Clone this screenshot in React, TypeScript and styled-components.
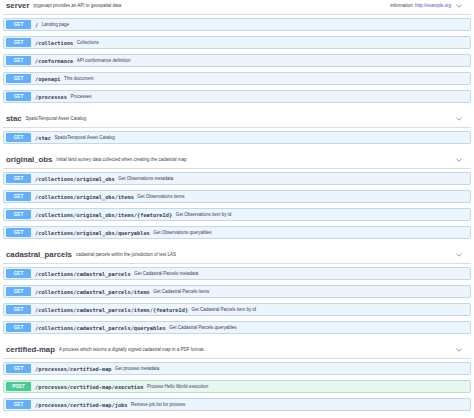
import styled, { createGlobalStyle } from 'styled-components';

type Method = 'GET' | 'POST';

interface Operation {
  method: Method;
  path: string;
  summary: string;
}

interface Tag {
  name: string;
  description: string;
  info?: boolean;
  operations: Operation[];
}

const tags: Tag[] = [
  {
    name: 'server',
    description: 'pygeoapi provides an API to geospatial data',
    info: true,
    operations: [
      { method: 'GET', path: '/', summary: 'Landing page' },
      { method: 'GET', path: '/collections', summary: 'Collections' },
      { method: 'GET', path: '/conformance', summary: 'API conformance definition' },
      { method: 'GET', path: '/openapi', summary: 'This document' },
      { method: 'GET', path: '/processes', summary: 'Processes' },
    ],
  },
  {
    name: 'stac',
    description: 'SpatioTemporal Asset Catalog',
    operations: [{ method: 'GET', path: '/stac', summary: 'SpatioTemporal Asset Catalog' }],
  },
  {
    name: 'original_obs',
    description: 'Initial land survey data collected when creating the cadastral map',
    operations: [
      { method: 'GET', path: '/collections/original_obs', summary: 'Get Observations metadata' },
      { method: 'GET', path: '/collections/original_obs/items', summary: 'Get Observations items' },
      {
        method: 'GET',
        path: '/collections/original_obs/items/{featureId}',
        summary: 'Get Observations item by id',
      },
      {
        method: 'GET',
        path: '/collections/original_obs/queryables',
        summary: 'Get Observations queryables',
      },
    ],
  },
  {
    name: 'cadastral_parcels',
    description: 'cadastral parcels within the jurisdiction of test LAS',
    operations: [
      {
        method: 'GET',
        path: '/collections/cadastral_parcels',
        summary: 'Get Cadastral Parcels metadata',
      },
      {
        method: 'GET',
        path: '/collections/cadastral_parcels/items',
        summary: 'Get Cadastral Parcels items',
      },
      {
        method: 'GET',
        path: '/collections/cadastral_parcels/items/{featureId}',
        summary: 'Get Cadastral Parcels item by id',
      },
      {
        method: 'GET',
        path: '/collections/cadastral_parcels/queryables',
        summary: 'Get Cadastral Parcels queryables',
      },
    ],
  },
  {
    name: 'certified-map',
    description: 'A process which returns a digitally signed cadastral map in a PDF format.',
    operations: [
      { method: 'GET', path: '/processes/certified-map', summary: 'Get process metadata' },
      {
        method: 'POST',
        path: '/processes/certified-map/execution',
        summary: 'Process Hello World execution',
      },
      {
        method: 'GET',
        path: '/processes/certified-map/jobs',
        summary: 'Retrieve job list for process',
      },
    ],
  },
];

const palette = {
  GET: { badge: '#61affe', bg: '#ecf4fc', border: '#bfd7f1' },
  POST: { badge: '#49cc90', bg: '#e8f6f0', border: '#b6e2cd' },
};

const GlobalStyle = createGlobalStyle`
  body {
    margin: 0;
    background: #fff;
    font-family: "Liberation Sans", Arial, sans-serif;
    color: #3b4151;
  }
`;

const Page = styled.div`
  display: flex;
  flex-direction: column;
  gap: 2px;
  margin-top: -3px;
  padding: 0 3px;
`;

const Section = styled.section`
  display: flex;
  flex-direction: column;
  gap: 5px;
  padding-bottom: 5px;
`;

const TagHeader = styled.div`
  display: flex;
  align-items: center;
  box-sizing: border-box;
  height: 18px;
  padding: 0 9px 0 3px;
  margin-bottom: -2px;
  border-bottom: 1px solid #dcdde1;
`;

const TagName = styled.span`
  font-size: 7.8px;
  font-weight: 700;
  color: #3b4151;
`;

const TagDescription = styled.span`
  flex: 1;
  margin-left: 4px;
  font-size: 4.5px;
  color: #3b4151;
`;

const Info = styled.span`
  margin-right: 5px;
  font-size: 4.5px;
  color: #3b4151;

  a {
    color: #4a4fc4;
    text-decoration: none;
  }
`;

const Chevron = styled.svg`
  width: 6px;
  height: 4px;
  flex-shrink: 0;
`;

const OpBlock = styled.div<{ $method: Method }>`
  display: flex;
  align-items: center;
  box-sizing: border-box;
  height: 13px;
  padding: 0 2px;
  background: ${(p) => palette[p.$method].bg};
  border: 1px solid ${(p) => palette[p.$method].border};
  border-radius: 2px;
`;

const Badge = styled.span<{ $method: Method }>`
  display: flex;
  align-items: center;
  justify-content: center;
  width: 25px;
  height: 9px;
  border-radius: 1px;
  background: ${(p) => palette[p.$method].badge};
  color: #fff;
  font-size: 4.6px;
  font-weight: 700;
`;

const Path = styled.span`
  margin-left: 4px;
  font-family: "DejaVu Sans Mono", "Liberation Mono", monospace;
  font-size: 5.3px;
  font-weight: 700;
  color: #3b4151;
`;

const Summary = styled.span`
  margin-left: 3.5px;
  font-size: 4.5px;
  color: #3b4151;
`;

const ChevronIcon = () => (
  <Chevron viewBox="0 0 6 4">
    <path d="M0.5 0.8 L3 3.2 L5.5 0.8" fill="none" stroke="#6b6f78" strokeWidth="0.7" />
  </Chevron>
);

export default function App() {
  return (
    <>
      <GlobalStyle />
      <Page>
        {tags.map((tag) => (
          <Section key={tag.name}>
            <TagHeader>
              <TagName>{tag.name}</TagName>
              <TagDescription>{tag.description}</TagDescription>
              {tag.info && (
                <Info>
                  information: <a href="#">http://example.org</a>
                </Info>
              )}
              <ChevronIcon />
            </TagHeader>
            {tag.operations.map((op) => (
              <OpBlock key={op.method + op.path} $method={op.method}>
                <Badge $method={op.method}>{op.method}</Badge>
                <Path>{op.path}</Path>
                <Summary>{op.summary}</Summary>
              </OpBlock>
            ))}
          </Section>
        ))}
      </Page>
    </>
  );
}
